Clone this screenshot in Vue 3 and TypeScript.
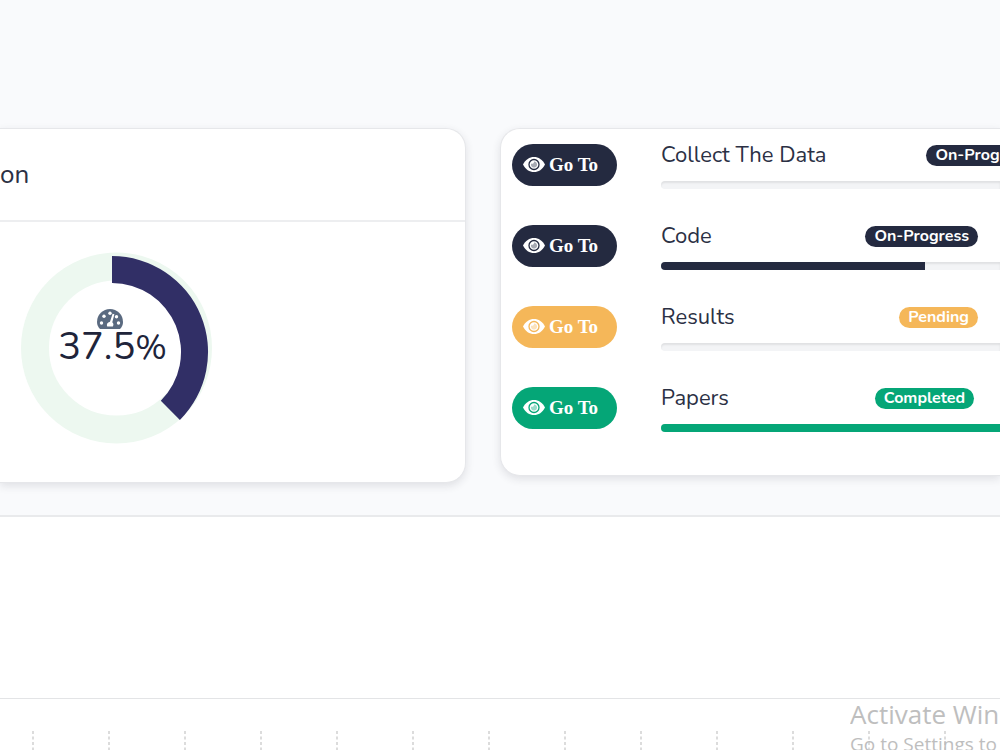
<script setup lang="ts">
interface Task {
  name: string
  status: string
  tone: 'dark' | 'warning' | 'success'
  progress: number
  place: 'edge' | 'inset' | 'inset-more'
}

const tasks: Task[] = [
  { name: 'Collect The Data', status: 'On-Progress', tone: 'dark', progress: 0, place: 'edge' },
  { name: 'Code', status: 'On-Progress', tone: 'dark', progress: 78, place: 'inset' },
  { name: 'Results', status: 'Pending', tone: 'warning', progress: 0, place: 'inset' },
  { name: 'Papers', status: 'Completed', tone: 'success', progress: 100, place: 'inset-more' },
]

const gridLines: number[] = Array.from({ length: 13 }, (_, i) => 33 + i * 76)
</script>

<template>
  <main class="page">
    <div class="cards">
      <section class="card completion">
        <header class="card-head"><h2>on</h2></header>
        <div class="card-body">
          <div class="donut">
            <svg class="ring" viewBox="0 0 192 192" aria-hidden="true">
              <circle cx="96.500" cy="96" r="81.500" fill="none" stroke="#edf8f0" stroke-width="28" />
              <path d="M92 4A96 96 0 0 1 159.900 167.900L140.800 148.800A69 69 0 0 0 92 31Z" fill="#312f66" />
            </svg>
            <div class="reading">
              <svg class="gauge" viewBox="0 0 26 20" aria-hidden="true">
                <path d="M3 20C1 18 0 15.800 0 13A13 13 0 0 1 26 13C26 15.800 25 18 23 20Z" fill="#5a6a80" />
                <g fill="#fff">
                  <circle cx="4.500" cy="14" r="1.700" />
                  <circle cx="7" cy="7.300" r="1.700" />
                  <circle cx="13" cy="4.200" r="1.700" />
                  <circle cx="19.500" cy="7.800" r="1.700" />
                  <circle cx="21.500" cy="14" r="1.700" />
                  <path d="M15.600 4.800L17.400 5.300L15.300 13.300C16.600 14.500 16.800 16 15.800 17.600H10.200C9.300 15.500 10.300 13.300 13 12.800Z" />
                </g>
              </svg>
              <strong>37.5<span class="unit">%</span></strong>
            </div>
          </div>
        </div>
      </section>

      <section class="card tasks">
        <div v-for="task in tasks" :key="task.name" class="task">
          <button type="button" class="go" :class="task.tone">
            <svg class="eye" viewBox="0 0 22 16" aria-hidden="true">
              <path d="M0 7.500C2.500 2.500 6.500 0 11 0S19.500 2.500 22 7.500C19.500 12.500 15.500 15 11 15S2.500 12.500 0 7.500Z" fill="#fff" />
              <circle cx="11" cy="7.500" r="5" fill="none" stroke="currentColor" stroke-width="1.300" />
              <path d="M8.100 6.400A3.100 3.100 0 1 0 11 4.400A1.900 1.900 0 0 1 8.100 6.400Z" fill="currentColor" opacity=".4" />
            </svg>
            <span>Go To</span>
          </button>
          <div class="detail">
            <div class="line">
              <h3>{{ task.name }}</h3>
              <span class="badge" :class="[task.tone, task.place]">{{ task.status }}</span>
            </div>
            <div class="track" role="progressbar" :aria-label="task.name" :aria-valuenow="task.progress" aria-valuemin="0" aria-valuemax="100">
              <div class="fill" :class="task.tone" :style="{ width: task.progress + '%' }"></div>
            </div>
          </div>
        </div>
      </section>
    </div>

    <section class="chart-card">
      <header class="chart-head"></header>
      <div class="chart-body">
        <svg class="grid" height="19" aria-hidden="true">
          <line v-for="x in gridLines" :key="x" :x1="x" y1="0" :x2="x" y2="19" stroke="#dcdcdc" stroke-width="2" stroke-dasharray="3 2.500" />
        </svg>
      </div>
    </section>

    <aside class="notice">
      <p class="notice-title">Activate Win</p>
      <p class="notice-text">Go to Settings to</p>
    </aside>
  </main>
</template>

<style>
body {
  margin: 0;
}
</style>

<style scoped>
.page {
  position: relative;
  display: flex;
  flex-direction: column;
  box-sizing: border-box;
  min-height: 100vh;
  padding-top: 128px;
  overflow: hidden;
  background: #f9fafc;
  color: #2b3044;
  font-family: Nunito, "Noto Sans", sans-serif;
}

h2,
h3,
p {
  margin: 0;
  font-weight: 400;
}

.cards {
  display: grid;
  grid-template-columns: 466fr 500fr;
  align-items: start;
  gap: 34px;
}

.card {
  box-sizing: border-box;
  min-width: 0;
  border: 1px solid #e6e7ea;
  background: #fff;
  box-shadow: 0 3px 8px rgba(40, 45, 60, 0.12);
}

.completion {
  border-left: 0;
  border-radius: 0 20px 20px 0;
}

.card-head {
  padding: 30px 0;
  border-bottom: 2px solid #edeef0;
}

h2 {
  font-size: 26px;
  line-height: 31px;
}

.card-body {
  padding: 30px 20px 38px;
}

.donut {
  display: grid;
  width: 192px;
}

.ring,
.reading {
  grid-area: 1 / 1;
}

.ring {
  width: 192px;
  height: 192px;
}

.reading {
  display: flex;
  flex-direction: column;
  align-items: center;
  padding: 57px 7px 0 0;
}

.gauge {
  width: 26px;
  height: 20px;
  margin-right: 5px;
}

strong {
  font-size: 38px;
  font-weight: 400;
  line-height: 35px;
  color: #20243a;
}

.unit {
  font-size: 34px;
}

.tasks {
  display: flex;
  flex-direction: column;
  gap: 36px;
  padding: 15px 0 43px 11px;
  border-right: 0;
  border-radius: 20px 0 0 20px;
}

.task {
  display: grid;
  grid-template-columns: 105px minmax(0, 1fr);
  align-items: start;
  gap: 44px;
}

.detail {
  padding-top: 1px;
}

.go {
  display: flex;
  align-items: center;
  gap: 4px;
  height: 42px;
  padding: 0 11px;
  border: 0;
  border-radius: 21px;
  font: 700 19px/24px "Liberation Serif", serif;
  white-space: nowrap;
}

.go span {
  color: #fff;
}

.eye {
  flex: none;
  width: 22px;
  height: 16px;
}

.dark {
  background: #242a40;
  color: #242a40;
}

.warning {
  background: #f5b759;
  color: #f5b759;
}

.success {
  background: #05a677;
  color: #05a677;
}

.line {
  display: flex;
  align-items: flex-start;
  justify-content: space-between;
  height: 22px;
}

h3 {
  font-size: 22px;
  line-height: 21px;
  white-space: nowrap;
}

.badge {
  flex: none;
  padding: 0 9px;
  border-radius: 11px;
  color: #fff;
  font-size: 16px;
  font-weight: 700;
  line-height: 21px;
}

.edge {
  margin-right: -39px;
}

.inset {
  margin-right: 22px;
}

.inset-more {
  margin-right: 26px;
}

.track {
  height: 8px;
  margin-top: 14px;
  overflow: hidden;
  border-radius: 4px 0 0 4px;
  background: #f3f4f6;
  box-shadow: inset 0 2px 2px rgba(0, 0, 0, 0.08);
}

.fill {
  height: 100%;
}

.chart-card {
  display: flex;
  flex: 1;
  flex-direction: column;
  margin-top: 32px;
  border-top: 2px solid #e9eaec;
  background: #fff;
}

.chart-head {
  height: 181px;
  border-bottom: 1px solid #e3e4e6;
}

.chart-body {
  padding-top: 32px;
}

.grid {
  display: block;
  width: 100%;
}

.notice {
  position: absolute;
  top: 697px;
  left: 85%;
  height: 53px;
  overflow: hidden;
  color: #bebebe;
  font-family: "Segoe UI", "Open Sans", sans-serif;
  white-space: nowrap;
}

.notice-title {
  font-size: 26px;
  line-height: 34px;
}

.notice-text {
  font-size: 19px;
  line-height: 26px;
}
</style>
